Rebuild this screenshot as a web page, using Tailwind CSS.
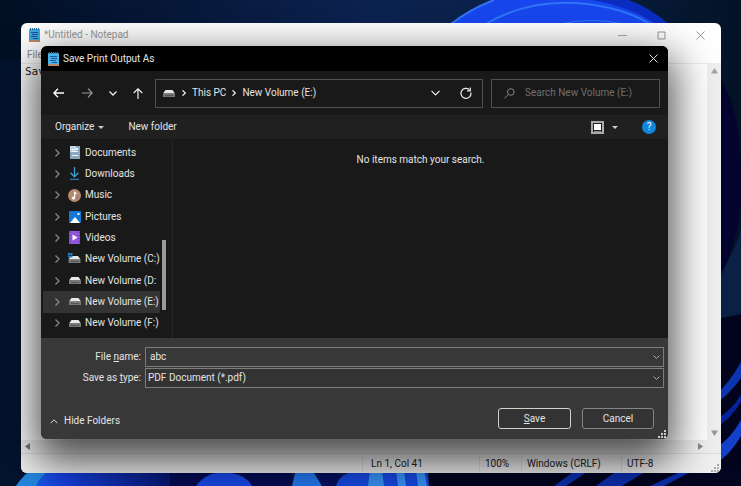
<!DOCTYPE html>
<html lang="en">
<head>
    <meta charset="UTF-8">
    <meta name="viewport" content="width=device-width, initial-scale=1.0">
    <title>Save Print Output As</title>
    <script src="https://cdn.jsdelivr.net/npm/@tailwindcss/browser@4"></script>
</head>
<body class="relative h-screen overflow-hidden bg-[#04142f] font-['Roboto','Open_Sans',sans-serif] text-[10px] leading-4">

    <!-- Wallpaper -->
    <svg class="absolute inset-0 w-full h-full" viewBox="0 0 741 486" preserveAspectRatio="none" aria-hidden="true">
        <defs>
            <linearGradient id="sky" x1="0" x2="1" y1="0" y2="0">
                <stop offset="0" stop-color="#020f24"/>
                <stop offset=".5" stop-color="#0c2250"/>
                <stop offset=".75" stop-color="#0a2145"/>
                <stop offset="1" stop-color="#031226"/>
            </linearGradient>
            <linearGradient id="petal" x1="0" x2="1" y1="0" y2="0">
                <stop offset="0" stop-color="#1d6df0"/>
                <stop offset=".25" stop-color="#1540e0"/>
                <stop offset="1" stop-color="#030b50"/>
            </linearGradient>
        </defs>
        <rect width="741" height="486" fill="url(#sky)"/>
        <rect y="60" width="30" height="426" fill="#04132e"/>
        <path d="M450 24Q470 9 492 0H628Q650 8 668 24Z" fill="#1746ec"/>
        <path d="M592 0H628Q650 8 668 24H656Q628 6 592 0Z" fill="#0a2cc0"/>
        <path d="M451 24Q470 9 494 0M486 24Q540-8 610 8Q634 14 650 24" fill="none" stroke="#2e74f5" stroke-width="2"/>
        <path d="M560 24Q590 17 624 24" fill="none" stroke="#2e74f5" stroke-width="1"/>
        <path d="M715 72Q741 100 741 180L741 205Q735 255 715 285Z" fill="#02032e"/>
        <path d="M715 285Q735 250 741 230V315Q725 316 715 320Z" fill="#0a2145"/>
        <path d="M715 320L741 314V486H715Z" fill="#02031c"/>
        <path d="M715 395Q728 385 741 362V378Q728 396 715 404Z" fill="#0c34b0"/>
        <path d="M715 448Q730 440 741 420V436Q730 455 715 464Z" fill="#1240c8"/>
        <path d="M715 420Q732 410 741 395V402Q730 420 715 428Z" fill="#08229a"/>
        <path d="M16 486Q24 474 38 466H200V486Z" fill="url(#petal)"/>
        <path d="M16 486Q24 474 32 470H50Q40 476 36 486Z" fill="#2487e0"/>
        <rect x="170" y="470" width="122" height="16" fill="#030b50"/>
        <path d="M196 486Q206 472 225 472Q246 474 252 486Z" fill="#1746e0"/>
        <path d="M292 486L296 470H312L322 486Z" fill="#2373e8"/>
        <path d="M322 486L314 470H345Q338 478 336 486Z" fill="#04105c"/>
        <path d="M336 486Q340 470 370 470H427L429 486Z" fill="#1546da"/>
        <path d="M370 470H382L384 486H368ZM396 470H404L406 486H398ZM416 470H424L427 486H418Z" fill="#368df0"/>
        <path d="M429 470H741V486H429Z" fill="#020420"/>
        <path d="M554 486L576 470H590L566 486ZM596 486L618 470H648L622 486ZM650 486L684 470H694L664 486Z" fill="#0c2da8"/>
    </svg>

    <!-- Notepad window -->
    <main class="absolute left-[21px] right-[20px] top-[23px] bottom-[13px] flex flex-col overflow-hidden rounded-md bg-white text-[#222]">
        <header class="flex h-6 shrink-0 items-center pl-2 text-[#999]">
            <svg class="h-[14px] w-[11px]" viewBox="0 0 11 14" aria-hidden="true">
                <rect y="1" width="11" height="12" rx="1" fill="#3fa9dc"/>
                <rect y="12" width="11" height="2" fill="#b98a6a"/>
                <path d="M1.5 0v2M3.5 0v2M5.5 0v2M7.5 0v2M9.5 0v2" stroke="#1c6fa8"/>
                <path d="M2 4.5h7M3 6.5h6M2 8.5h6M4 10.5h5" stroke="#1454a0"/>
            </svg>
            <h1 class="pl-1">*Untitled - Notepad</h1>
            <div class="ml-auto flex gap-[30px] pr-4">
                <button type="button" aria-label="Minimize"><svg class="size-[9px]" viewBox="0 0 9 9"><path d="M0 4.5h9" stroke="#aaa"/></svg></button>
                <button type="button" aria-label="Maximize"><svg class="size-[9px]" viewBox="0 0 9 9"><path d="M1 1h7v7H1z" fill="none" stroke="#999"/></svg></button>
                <button type="button" aria-label="Close"><svg class="size-[9px]" viewBox="0 0 9 9"><path d="M.5.5l8 8M8.5.5l-8 8" stroke="#999"/></svg></button>
            </div>
        </header>
        <nav class="h-[17px] shrink-0 border-b border-[#eee] pl-[6px] text-[#888]">
            <button type="button">File</button>
        </nav>
        <div class="flex min-h-0 flex-1">
            <textarea aria-label="Document" class="flex-1 resize-none pl-1 font-['DejaVu_Sans_Mono','Liberation_Mono',monospace] text-[11px] leading-4 outline-none">Save</textarea>
            <div class="flex w-[14px] flex-col items-center justify-between bg-[#efefef] pt-1 pb-1">
                <svg class="h-[6px] w-[7px]" viewBox="0 0 7 6"><path d="M3.5 0L7 5.500H0z" fill="#a3a3a3"/></svg>
                <svg class="h-[6px] w-[7px]" viewBox="0 0 7 6"><path d="M3.500 6L7 .5H0z" fill="#999"/></svg>
            </div>
        </div>
        <div class="flex h-[13px] shrink-0 items-center justify-between bg-[#efefef] pr-[18px] pl-1">
            <svg class="h-[7px] w-[5px]" viewBox="0 0 5 7"><path d="M0 3.500L5 0v7z" fill="#777"/></svg>
            <svg class="h-[7px] w-[5px]" viewBox="0 0 5 7"><path d="M5 3.500L0 0v7z" fill="#888"/></svg>
        </div>
        <footer class="flex h-[20px] shrink-0 items-center justify-end border-t border-[#ddd] bg-[#f0f0f0]">
            <span class="w-[117px] border-l border-[#ddd] pl-2">Ln 1, Col 41</span>
            <span class="w-[42px] border-l border-[#ddd] pl-[5px]">100%</span>
            <span class="w-[100px] border-l border-[#ddd] pl-[5px]">Windows (CRLF)</span>
            <span class="w-[100px] border-l border-[#ddd] pl-[5px]">UTF-8</span>
        </footer>
        <svg class="absolute right-[2px] bottom-[1px] size-2" viewBox="0 0 8 8"><path d="M6 0h2v2H6zM3 3h2v2H3zM6 3h2v2H6zM0 6h2v2H0zM3 6h2v2H3zM6 6h2v2H6z" fill="#aaa"/></svg>
    </main>

    <!-- Save dialog -->
    <section role="dialog" aria-label="Save Print Output As" class="absolute left-[41px] right-[73px] top-[46px] bottom-[47px] flex flex-col overflow-hidden rounded-md bg-[#191919] text-[#e4e4e4] shadow-[0_16px_42px_6px_rgba(0,0,0,0.7)]">
        <header class="flex h-[25px] shrink-0 items-center bg-black pr-[10px] pl-[7px]">
            <svg class="h-[14px] w-[11px]" viewBox="0 0 11 14" aria-hidden="true">
                <rect y="1" width="11" height="12" rx="1" fill="#4cb4e4"/>
                <rect y="12" width="11" height="2" fill="#b98a6a"/>
                <path d="M1.5 0v2M3.5 0v2M5.5 0v2M7.5 0v2M9.5 0v2" stroke="#2a7fb8"/>
                <path d="M2 4.5h7M3 6.5h6M2 8.5h6M4 10.5h5" stroke="#1454a0"/>
            </svg>
            <h2 class="pl-1">Save Print Output As</h2>
            <button type="button" aria-label="Close dialog" class="ml-auto"><svg class="size-[9px]" viewBox="0 0 9 9"><path d="M.5.5l8 8M8.5.5l-8 8" stroke="#ddd"/></svg></button>
        </header>

        <div class="flex h-[44px] shrink-0 items-center pr-2 pl-3">
            <div class="flex w-[102px] items-center gap-4">
                <button type="button" aria-label="Back"><svg class="h-[10px] w-[11px]" viewBox="0 0 11 10" fill="none" stroke="#fff" stroke-width="1.300"><path d="M11 5H1M5 .7L.9 5 5 9.300"/></svg></button>
                <button type="button" aria-label="Forward" class="pl-[2px]"><svg class="h-[10px] w-[11px]" viewBox="0 0 11 10" fill="none" stroke="#999" stroke-width="1.200"><path d="M0 5h10M6 .7L10.100 5 6 9.300"/></svg></button>
                <button type="button" aria-label="Recent locations"><svg class="h-[5px] w-2" viewBox="0 0 8 5" fill="none" stroke="#eee" stroke-width="1.300"><path d="M.5.5L4 4 7.500.5"/></svg></button>
                <button type="button" aria-label="Up"><svg class="h-[11px] w-[10px]" viewBox="0 0 10 11" fill="none" stroke="#eee" stroke-width="1.200"><path d="M5 11V1M.7 5L5 .9 9.300 5"/></svg></button>
            </div>
            <div class="flex h-[29px] flex-1 items-center border border-[#505050] pr-[10px] pl-[7px]">
                <svg class="h-[7px] w-3" viewBox="0 0 12 7"><path d="M2.500 0h7L12 3.500H0z" fill="#e8e8e8"/><path d="M0 3.500h12V7H0z" fill="#777"/><path d="M2 5.500h8" stroke="#555"/></svg>
                <svg class="ml-[7px] h-[6px] w-1" viewBox="0 0 4 6" fill="none" stroke="#eee" stroke-width="1.200"><path d="M.5.3L3.300 3 .5 5.700"/></svg>
                <a href="#" class="pl-[6px]">This PC</a>
                <svg class="ml-[6px] h-[6px] w-1" viewBox="0 0 4 6" fill="none" stroke="#eee" stroke-width="1.200"><path d="M.5.3L3.300 3 .5 5.700"/></svg>
                <a href="#" class="pl-[6px]">New Volume (E:)</a>
                <button type="button" aria-label="Previous locations" class="ml-auto"><svg class="h-[6px] w-[9px]" viewBox="0 0 9 6" fill="none" stroke="#eee" stroke-width="1.200"><path d="M.5.8l4 4 4-4"/></svg></button>
                <button type="button" aria-label="Refresh" class="ml-5"><svg class="size-3" viewBox="0 0 12 12" fill="none" stroke="#eee" stroke-width="1.200"><path d="M10.900 5.500A5 5 0 1 1 9.300 2.600M10.300.5v3.300H7"/></svg></button>
            </div>
            <label class="ml-2 flex h-[29px] w-[169px] items-center border border-[#505050] pl-3">
                <svg class="size-[11px] shrink-0" viewBox="0 0 11 11" fill="none" stroke="#888"><circle cx="6.800" cy="4" r="3.300"/><path d="M4.400 6.400L.5 10.300"/></svg>
                <input type="search" aria-label="Search" placeholder="Search New Volume (E:)" class="ml-[10px] w-full min-w-0 bg-transparent outline-none placeholder:text-[#707070]">
            </label>
        </div>

        <div class="flex h-6 shrink-0 items-center bg-[#202020] pr-3 pl-[14px]">
            <button type="button" class="flex items-center gap-1">Organize <svg class="h-[3px] w-[6px]" viewBox="0 0 6 3"><path d="M0 0h6L3 3z" fill="#ccc"/></svg></button>
            <button type="button" class="ml-6">New folder</button>
            <button type="button" aria-label="Change your view" class="ml-auto flex items-center gap-2">
                <svg class="size-[13px]" viewBox="0 0 13 13"><path d="M1 1h11v11H1z" fill="#222" stroke="#aaa" stroke-width="2"/><path d="M3 3h7v6H3z" fill="#fff"/><path d="M3 10.500h7" stroke="#888"/></svg>
                <svg class="h-[3px] w-[6px]" viewBox="0 0 6 3"><path d="M0 0h6L3 3z" fill="#ccc"/></svg>
            </button>
            <button type="button" aria-label="Help" class="ml-6 size-[14px] rounded-full bg-[#1286dc] text-center leading-[14px] text-white">?</button>
        </div>

        <div class="flex min-h-0 flex-1">
            <div class="flex w-[132px] border-r border-[#262626] pl-[2px]">
                <ul class="grid w-[114px] auto-rows-fr pt-[3px] pb-1 whitespace-nowrap">
                    <li class="flex items-center pl-3">
                        <svg class="h-2 w-[5px] shrink-0" viewBox="0 0 5 8" fill="none" stroke="#888" stroke-width="1.300"><path d="M.5.5L4 4 .5 7.500"/></svg>
                        <span class="ml-2 flex w-[13px] shrink-0 justify-center"><svg class="h-[13px] w-[10px]" viewBox="0 0 10 13"><path d="M0 0h10v13H0z" fill="#8ba6c0"/><path d="M0 0h6v6H0z" fill="#c3d4e2"/><path d="M2 3.500h3M2 5.500h6M2 9.500h6" stroke="#eef5fa"/><path d="M6 2h2v2H6z" fill="#f5fafd"/></svg></span>
                        <span class="pl-1">Documents</span>
                    </li>
                    <li class="flex items-center pl-3">
                        <svg class="h-2 w-[5px] shrink-0" viewBox="0 0 5 8" fill="none" stroke="#888" stroke-width="1.300"><path d="M.5.5L4 4 .5 7.500"/></svg>
                        <span class="ml-2 flex w-[13px] shrink-0 justify-center"><svg class="h-[13px] w-[11px]" viewBox="0 0 11 13" fill="none" stroke="#3a9ed2" stroke-width="1.300"><path d="M5.500 0v9.500M1.500 5.800l4 4 4-4"/><path d="M1 12.300h9" stroke="#2d79a8"/></svg></span>
                        <span class="pl-1">Downloads</span>
                    </li>
                    <li class="flex items-center pl-3">
                        <svg class="h-2 w-[5px] shrink-0" viewBox="0 0 5 8" fill="none" stroke="#888" stroke-width="1.300"><path d="M.5.5L4 4 .5 7.500"/></svg>
                        <span class="ml-2 flex w-[13px] shrink-0 justify-center"><svg class="size-[13px]" viewBox="0 0 13 13"><circle cx="6.500" cy="6.500" r="6.500" fill="#b58a6c"/><circle cx="5.500" cy="9" r="1.600" fill="#fff"/><path d="M6.600 9V3.200l2 1.500" fill="none" stroke="#fff" stroke-width="1.200"/><path d="M8 10l2.500-2.500" stroke="#8a50c8"/></svg></span>
                        <span class="pl-1">Music</span>
                    </li>
                    <li class="flex items-center pl-3">
                        <svg class="h-2 w-[5px] shrink-0" viewBox="0 0 5 8" fill="none" stroke="#888" stroke-width="1.300"><path d="M.5.5L4 4 .5 7.500"/></svg>
                        <span class="ml-2 flex w-[13px] shrink-0 justify-center"><svg class="size-3" viewBox="0 0 12 12"><rect width="12" height="12" rx="1" fill="#1479d4"/><path d="M1 12l5-6 5 6z" fill="#fff"/><path d="M8.500 2h2v2h-2z" fill="#e8f4ff"/></svg></span>
                        <span class="pl-1">Pictures</span>
                    </li>
                    <li class="flex items-center pl-3">
                        <svg class="h-2 w-[5px] shrink-0" viewBox="0 0 5 8" fill="none" stroke="#888" stroke-width="1.300"><path d="M.5.5L4 4 .5 7.500"/></svg>
                        <span class="ml-2 flex w-[13px] shrink-0 justify-center"><svg class="h-[13px] w-[11px]" viewBox="0 0 11 13"><rect width="11" height="13" rx="1" fill="#9156dc"/><path d="M1 1v11M10 1v11" stroke="#4a2484" stroke-dasharray="1 2"/><path d="M3.500 3.500l5 3-5 3z" fill="#fff"/></svg></span>
                        <span class="pl-1">Videos</span>
                    </li>
                    <li class="flex items-center pl-3">
                        <svg class="h-2 w-[5px] shrink-0" viewBox="0 0 5 8" fill="none" stroke="#888" stroke-width="1.300"><path d="M.5.5L4 4 .5 7.500"/></svg>
                        <span class="ml-2 flex w-[13px] shrink-0 justify-center"><svg class="h-[13px] w-[13px]" viewBox="0 0 13 13"><path d="M3 3h7l2.500 3.500H.5z" fill="#e8e8e8"/><path d="M.5 6.500h12V10H.5z" fill="#777"/><path d="M2.500 8.500h8" stroke="#555"/><path d="M0 0h2v2H0zM2.500 0h2v2h-2zM0 2.500h2v2H0zM2.500 2.500h2v2h-2z" fill="#1688e4"/></svg></span>
                        <span class="pl-1">New Volume (C:)</span>
                    </li>
                    <li class="flex items-center pl-3">
                        <svg class="h-2 w-[5px] shrink-0" viewBox="0 0 5 8" fill="none" stroke="#888" stroke-width="1.300"><path d="M.5.5L4 4 .5 7.500"/></svg>
                        <span class="ml-2 flex w-[13px] shrink-0 justify-center"><svg class="h-[7px] w-3" viewBox="0 0 12 7"><path d="M2.500 0h7L12 3.500H0z" fill="#e8e8e8"/><path d="M0 3.500h12V7H0z" fill="#777"/><path d="M2 5.500h8" stroke="#555"/></svg></span>
                        <span class="pl-1">New Volume (D:</span>
                    </li>
                    <li class="flex items-center bg-[#333] pl-3">
                        <svg class="h-2 w-[5px] shrink-0" viewBox="0 0 5 8" fill="none" stroke="#888" stroke-width="1.300"><path d="M.5.5L4 4 .5 7.500"/></svg>
                        <span class="ml-2 flex w-[13px] shrink-0 justify-center"><svg class="h-[7px] w-3" viewBox="0 0 12 7"><path d="M2.500 0h7L12 3.500H0z" fill="#e8e8e8"/><path d="M0 3.500h12V7H0z" fill="#777"/><path d="M2 5.500h8" stroke="#555"/></svg></span>
                        <span class="pl-1">New Volume (E:)</span>
                    </li>
                    <li class="flex items-center pl-3">
                        <svg class="h-2 w-[5px] shrink-0" viewBox="0 0 5 8" fill="none" stroke="#888" stroke-width="1.300"><path d="M.5.5L4 4 .5 7.500"/></svg>
                        <span class="ml-2 flex w-[13px] shrink-0 justify-center"><svg class="h-[7px] w-3" viewBox="0 0 12 7"><path d="M2.500 0h7L12 3.500H0z" fill="#e8e8e8"/><path d="M0 3.500h12V7H0z" fill="#777"/><path d="M2 5.500h8" stroke="#555"/></svg></span>
                        <span class="pl-1">New Volume (F:)</span>
                    </li>
                </ul>
                <div class="flex flex-col justify-end pb-7 pl-[5px]">
                    <div class="h-[70px] w-1 bg-[#9a9a9a]"></div>
                </div>
            </div>
            <p class="flex-1 pt-[13px] text-center">No items match your search.</p>
        </div>

        <form class="relative shrink-0 bg-[#383838] pt-[9px] pr-1">
            <div class="grid grid-cols-[100px_1fr] items-center gap-x-1 gap-y-px">
                <label for="filename" class="text-right">File <u>n</u>ame:</label>
                <div class="flex h-5 items-center border border-[#7c7c7c] pr-[3px]">
                    <input id="filename" type="text" value="abc" class="min-w-0 flex-1 bg-transparent pl-1 outline-none">
                    <svg class="h-[5px] w-[7px]" viewBox="0 0 7 5" fill="none" stroke="#aaa"><path d="M.5.5l3 3 3-3"/></svg>
                </div>
                <label for="filetype" class="text-right">Save as <u>t</u>ype:</label>
                <div class="flex h-5 items-center border border-[#7c7c7c] bg-[#333] pr-[3px]">
                    <select id="filetype" class="min-w-0 flex-1 appearance-none bg-transparent pl-[2px] outline-none">
                        <option>PDF Document (*.pdf)</option>
                    </select>
                    <svg class="h-[5px] w-[7px]" viewBox="0 0 7 5" fill="none" stroke="#aaa"><path d="M.5.5l3 3 3-3"/></svg>
                </div>
            </div>
            <div class="flex items-end gap-[11px] pt-5 pr-[10px] pb-[10px] pl-[9px]">
                <button type="button" class="mr-auto flex items-center gap-[6px]"><svg class="h-[5px] w-2" viewBox="0 0 8 5" fill="none" stroke="#ddd"><path d="M.5 4.300L4 .8l3.500 3.500"/></svg>Hide Folders</button>
                <button type="submit" class="h-[21px] w-[73px] rounded-[3px] border border-[#d0d0d0] bg-[#333]"><u>S</u>ave</button>
                <button type="button" class="h-[21px] w-[72px] rounded-[3px] border border-[#858585] bg-[#333]">Cancel</button>
            </div>
            <svg class="absolute right-[2px] bottom-[1px] size-2" viewBox="0 0 8 8"><path d="M6 0h2v2H6zM3 3h2v2H3zM6 3h2v2H6zM0 6h2v2H0zM3 6h2v2H3zM6 6h2v2H6z" fill="#ccc"/></svg>
        </form>
    </section>

</body>
</html>
